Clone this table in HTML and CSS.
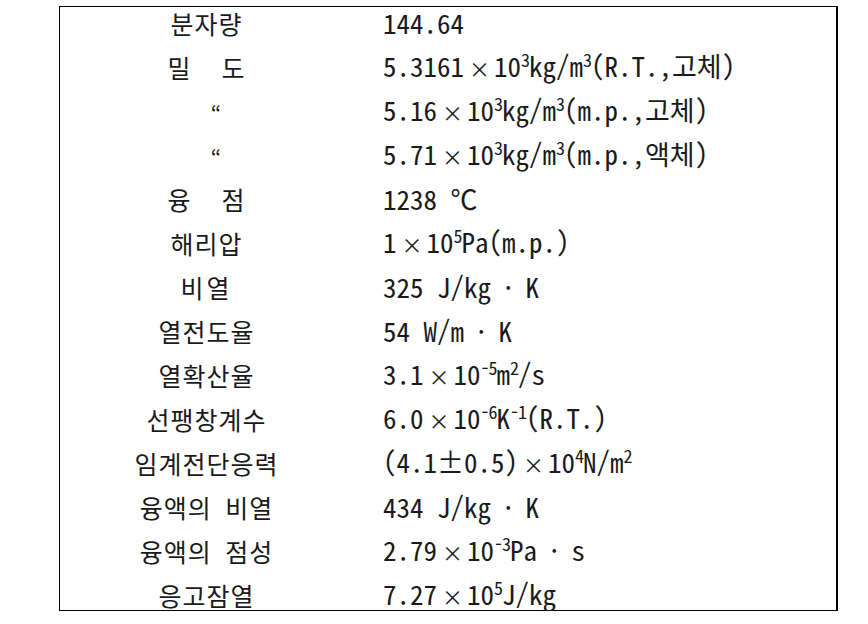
FILE: index.html
```html
<!DOCTYPE html>
<html lang="ko">
<head>
<meta charset="utf-8">
<title>물성표</title>
<link rel="stylesheet" href="styles.css">
</head>
<body>
<div class="table">
  <div class="rows">
    <div class="row"><div class="label">분자량</div><div class="value">144.64</div></div>
    <div class="row"><div class="label"><span class="spread">밀 도</span></div><div class="value">5.3161<span class="times">×</span>10<sup>3</sup>kg/m<sup>3</sup>(R.T.,고체)</div></div>
    <div class="row"><div class="label"><span class="ditto">“</span></div><div class="value">5.16<span class="times">×</span>10<sup>3</sup>kg/m<sup>3</sup>(m.p.,고체)</div></div>
    <div class="row"><div class="label"><span class="ditto">“</span></div><div class="value">5.71<span class="times">×</span>10<sup>3</sup>kg/m<sup>3</sup>(m.p.,액체)</div></div>
    <div class="row"><div class="label"><span class="spread">융 점</span></div><div class="value">1238 ℃</div></div>
    <div class="row"><div class="label">해리압</div><div class="value">1<span class="times">×</span>10<sup>5</sup>Pa(m.p.)</div></div>
    <div class="row"><div class="label wide">비열</div><div class="value">325 J/kg · K</div></div>
    <div class="row"><div class="label">열전도율</div><div class="value">54 W/m · K</div></div>
    <div class="row"><div class="label">열확산율</div><div class="value">3.1<span class="times">×</span>10<sup>-5</sup>m<sup>2</sup>/s</div></div>
    <div class="row"><div class="label">선팽창계수</div><div class="value">6.0<span class="times">×</span>10<sup>-6</sup>K<sup>-1</sup>(R.T.)</div></div>
    <div class="row"><div class="label">임계전단응력</div><div class="value">(4.1±0.5)<span class="times">×</span>10<sup>4</sup>N/m<sup>2</sup></div></div>
    <div class="row"><div class="label">융액의 비열</div><div class="value">434 J/kg · K</div></div>
    <div class="row"><div class="label">융액의 점성</div><div class="value">2.79<span class="times">×</span>10<sup>-3</sup>Pa · s</div></div>
    <div class="row"><div class="label">응고잠열</div><div class="value">7.27<span class="times">×</span>10<sup>5</sup>J/kg</div></div>
  </div>
</div>
</body>
</html>
```
FILE: styles.css
```css
html, body {
  margin: 0;
  padding: 0;
  background: #fff;
}

body {
  font-family: "Noto Sans Mono CJK KR", "Noto Sans CJK KR", sans-serif;
  color: #1a1a1a;
}

.table {
  margin: 6px 0 0 59px;
  width: 776px;
  height: 603px;
  border: 1px solid #000;
  border-right-width: 2px;
}

.rows {
  margin-top: -6px;
  display: flex;
  flex-direction: column;
}

.row {
  height: 44px;
  display: flex;
  align-items: center;
}

.label {
  width: 293px;
  text-align: center;
  font-size: 25px;
  line-height: 44px;
  letter-spacing: 1px;
}

.label.wide {
  letter-spacing: 3px;
}

.spread {
  display: inline-block;
  width: 78px;
  text-align: justify;
  text-align-last: justify;
}

.ditto {
  display: inline-block;
  padding-left: 20px;
  font-size: 22px;
}

.value {
  padding-left: 30px;
  font-size: 27px;
  line-height: 44px;
  white-space: pre;
}

.times {
  display: inline-block;
  font-size: 21px;
  padding: 0 4px 0 5px;
}

.value sup {
  font-size: 18px;
  line-height: 0;
  vertical-align: 10px;
  letter-spacing: -1px;
}
```
